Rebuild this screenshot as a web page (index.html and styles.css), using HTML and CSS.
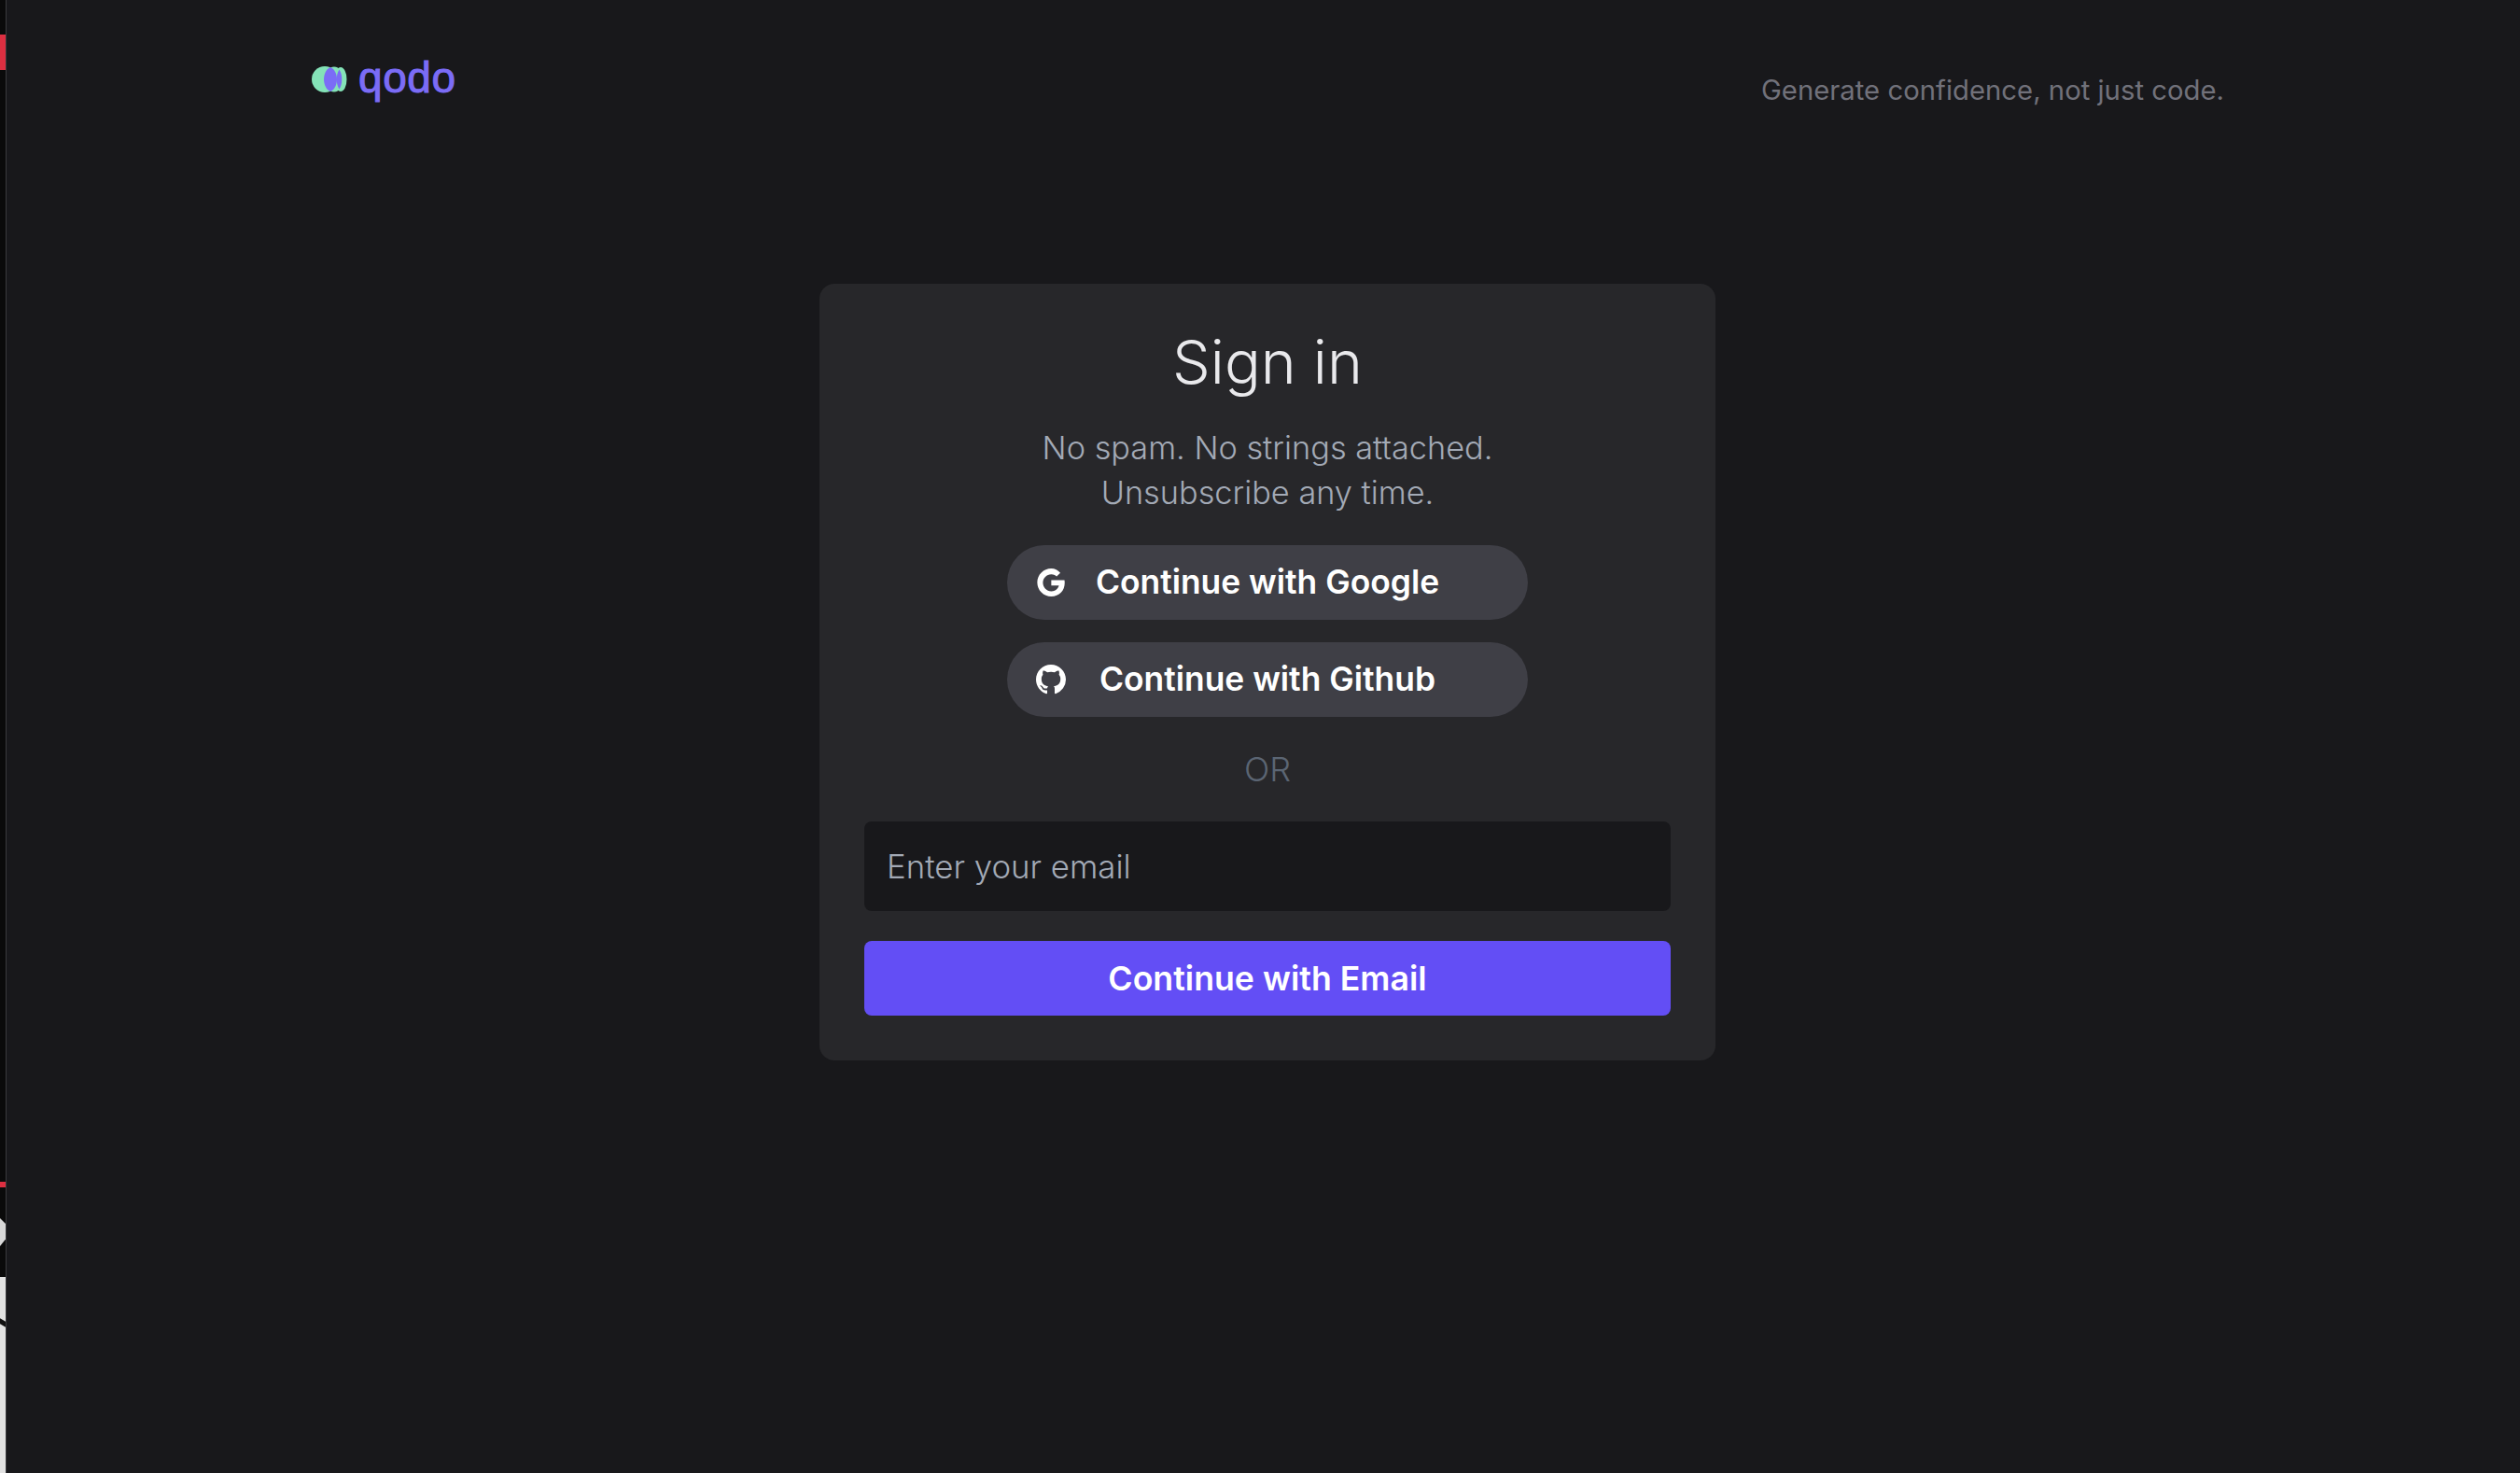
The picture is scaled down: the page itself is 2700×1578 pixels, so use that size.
FILE: index.html
```html
<!DOCTYPE html>
<html lang="en">
<head>
<meta charset="utf-8">
<title>Sign in - qodo</title>
<link rel="stylesheet" href="styles.css">
</head>
<body>
<div class="app">
  <aside class="strip" aria-hidden="true">
    <div class="s-gap s-a"></div><div class="s-red s-r1"></div>
    <div class="s-gap s-b"></div><div class="s-red s-r2"></div>
    <div class="s-gap s-c"></div><div class="s-blob"></div>
    <div class="s-gap s-d"></div>
    <div class="s-white"><div class="s-slash"></div></div>
  </aside>
  <div class="page">
    <header class="top">
      <div class="logo">
        <svg class="logo-mark" width="38" height="28" viewBox="0 0 38 28">
          <circle cx="14" cy="14" r="14" fill="#84e3b8"/>
          <ellipse cx="24" cy="14" rx="10" ry="13.5" fill="#84e3b8"/>
          <ellipse cx="31" cy="14" rx="6.5" ry="13" fill="#84e3b8"/>
          <path d="M20 1C29.3 5 29.3 23 20 27C10.7 23 10.7 5 20 1Z" fill="#7b6cf6"/>
          <path d="M29.5 3.5C33.2 9 33.2 19 29.5 24.5C25.8 19 25.8 9 29.5 3.5Z" fill="#7b6cf6"/>
        </svg>
        <span class="logo-text">qodo</span>
      </div>
      <p class="tagline">Generate confidence, not just code.</p>
    </header>
    <main class="card">
      <h1 class="title">Sign in</h1>
      <p class="sub">No spam. No strings attached.<br>Unsubscribe any time.</p>
      <div class="socials">
        <button class="pill" type="button">
          <svg class="pill-icon icon-g" width="36" height="36" viewBox="0 0 24 24"><path fill="#fff" d="M12.24 10.29v3.93h5.46c-.24 1.4-1.66 4.1-5.46 4.1-3.29 0-5.97-2.72-5.97-6.08s2.68-6.08 5.97-6.08c1.87 0 3.12.8 3.84 1.48l2.62-2.52C17.02 3.06 14.85 2 12.24 2 6.71 2 2.24 6.48 2.24 12s4.47 10 10 10c5.77 0 9.6-4.06 9.6-9.77 0-.66-.07-1.16-.16-1.94h-9.44z"/></svg>
          <span class="pill-label">Continue with Google</span>
        </button>
        <button class="pill" type="button">
          <svg class="pill-icon" width="32" height="32" viewBox="0 0 16 16"><path fill="#fff" d="M8 0C3.58 0 0 3.58 0 8c0 3.54 2.29 6.53 5.47 7.59.4.07.55-.17.55-.38 0-.19-.01-.82-.01-1.49-2.01.37-2.53-.49-2.69-.94-.09-.23-.48-.94-.82-1.13-.28-.15-.68-.52-.01-.53.63-.01 1.08.58 1.23.82.72 1.21 1.87.87 2.33.66.07-.52.28-.87.51-1.07-1.78-.2-3.64-.89-3.64-3.95 0-.87.31-1.59.82-2.15-.08-.2-.36-1.02.08-2.12 0 0 .67-.21 2.2.82.64-.18 1.32-.27 2-.27s1.36.09 2 .27c1.53-1.04 2.2-.82 2.2-.82.44 1.1.16 1.92.08 2.12.51.56.82 1.27.82 2.15 0 3.07-1.87 3.75-3.65 3.95.29.25.54.73.54 1.48 0 1.07-.01 1.93-.01 2.2 0 .21.15.46.55.38A8.01 8.01 0 0 0 16 8c0-4.42-3.58-8-8-8z"/></svg>
          <span class="pill-label">Continue with Github</span>
        </button>
      </div>
      <p class="or">OR</p>
      <input class="email" type="email" placeholder="Enter your email">
      <button class="submit" type="button">Continue with Email</button>
    </main>
  </div>
</div>
</body>
</html>
```
FILE: styles.css
```css
* { box-sizing: border-box; }
html, body { margin: 0; height: 100%; background: #18181b; }
body { font-family: Inter, "Liberation Sans", sans-serif; overflow: hidden; }
.app { display: flex; height: 1578px; }

.strip { width: 7px; flex: none; display: flex; flex-direction: column; background: #0a0a0a; border-right: 1px solid #3a3a3d; }
.s-gap { background: #0a0a0a; }
.s-a { height: 37px; }
.s-r1 { height: 38px; }
.s-b { height: 1191px; }
.s-r2 { height: 6px; }
.s-red, .s-r1, .s-r2 { background: #dc2f41; }
.s-c { height: 33px; }
.s-blob { height: 30px; background: #d8d8d8; clip-path: polygon(0 0, 100% 20%, 100% 75%, 0 100%); }
.s-d { height: 33px; }
.s-white { flex: 1; background: #e2e2e2; padding-top: 46px; }
.s-slash { height: 6px; background: #111; transform: skewY(30deg); }

.page { flex: 1; min-width: 0; padding-left: 9px; }
.top { width: 2050px; margin: 0 auto; display: flex; justify-content: space-between; align-items: flex-start; padding: 55px 0 0 1px; height: 304px; }
.logo { display: flex; align-items: flex-start; gap: 12px; }
.logo-mark { margin-top: 16px; }
.logo-text { font-family: "Liberation Sans", sans-serif; font-size: 46px; line-height: 56px; font-weight: 400; color: #7b6cf6; letter-spacing: 0.6px; -webkit-text-stroke: 1px #7b6cf6; }
.tagline { margin: 24px 0 0; font-size: 29.3px; line-height: 36px; color: #71717a; }

.card { width: 960px; margin: 0 auto; padding: 48px; background: #27272a; border-radius: 16px; display: flex; flex-direction: column; align-items: center; }
.title { margin: 0; font-size: 64.5px; line-height: 72px; font-weight: 300; color: #e9e9ec; }
.sub { margin: 32px 0 0; font-size: 34.3px; line-height: 48px; font-weight: 300; color: #a3aab6; text-align: center; }
.socials { margin-top: 32px; display: flex; flex-direction: column; gap: 24px; }
.pill { width: 558px; height: 80px; border: 0; border-radius: 40px; background: #3f3f46; color: #fff; display: flex; align-items: center; justify-content: center; position: relative; font: 600 35.4px/48px Inter, "Liberation Sans", sans-serif; padding: 0; }
.pill-icon { position: absolute; left: 31px; top: 50%; transform: translateY(-50%); }
.icon-g { left: 29px; }
.or { margin: 32px 0 0; font-size: 36px; line-height: 48px; font-weight: 300; color: #5b6573; }
.email { margin-top: 32px; width: 100%; height: 96px; border: 0; border-radius: 8px; background: #18181b; padding: 0 24px; font: 300 34.8px/48px Inter, "Liberation Sans", sans-serif; color: #fff; outline: 0; }
.email::placeholder { color: #a3aab6; opacity: 1; }
.submit { margin-top: 32px; width: 100%; height: 80px; border: 0; border-radius: 8px; background: #634ef5; color: #fff; font: 600 35.7px/48px Inter, "Liberation Sans", sans-serif; }
```
